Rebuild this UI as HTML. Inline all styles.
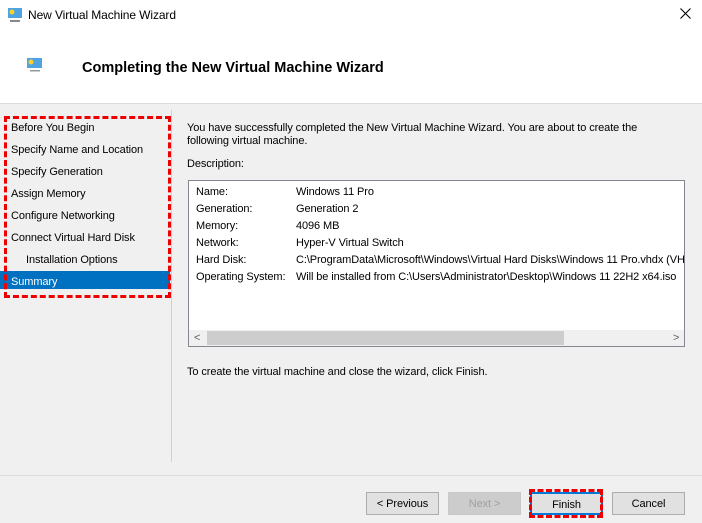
<!DOCTYPE html>
<html><head><style>
*{margin:0;padding:0;box-sizing:border-box}
body{width:702px;height:523px;background:#f0f0f0;font-family:"Liberation Sans",sans-serif;font-size:11px;letter-spacing:-0.1px;color:#000;position:relative;overflow:hidden}
.abs{position:absolute}
.nav div{position:absolute;left:11px;white-space:nowrap}
.btn{position:absolute;top:492px;height:23px;width:73px;border:1px solid #adadad;background:#e1e1e1;text-align:center;line-height:22px}
.lb div{position:absolute;white-space:nowrap}
</style></head><body>
<div class="abs" style="left:0;top:0;width:702px;height:104px;background:#fff;border-bottom:1px solid #dcdcdc"></div>
<svg class="abs" style="left:7px;top:7px" width="16" height="16"><rect x="1" y="1" width="14" height="10" fill="#4fa3e0"/><circle cx="5" cy="5" r="2.5" fill="#f6d32d"/><rect x="3" y="13" width="10" height="2" fill="#888"/></svg>
<div class="abs" style="left:28px;top:8px;font-size:12px">New Virtual Machine Wizard</div>
<svg class="abs" style="left:680px;top:8px" width="11" height="11"><path d="M0.5 0.5L10.5 10.5M10.5 0.5L0.5 10.5" stroke="#000" stroke-width="1.1"/></svg>
<svg class="abs" style="left:27px;top:58px" width="16" height="16"><rect x="0" y="0" width="15" height="10" fill="#4fa3e0"/><circle cx="4" cy="4" r="2.5" fill="#f6d32d"/><rect x="3" y="12" width="10" height="1.5" fill="#999"/></svg>
<div class="abs" style="left:82px;top:60px;font-size:14.5px;font-weight:bold;letter-spacing:0">Completing the New Virtual Machine Wizard</div>
<div class="nav">
<div style="top:122px">Before You Begin</div>
<div style="top:144px">Specify Name and Location</div>
<div style="top:166px">Specify Generation</div>
<div style="top:188px">Assign Memory</div>
<div style="top:210px">Configure Networking</div>
<div style="top:232px">Connect Virtual Hard Disk</div>
<div style="top:254px;left:26px">Installation Options</div>
</div>
<div class="abs" style="left:0;top:271px;width:170px;height:18px;background:#0070c0"></div>
<div class="abs" style="left:11px;top:276px;color:#fff">Summary</div>
<div class="abs" style="left:4px;top:116px;width:167px;height:182px;border:3px dashed #e00"></div>
<div class="abs" style="left:171px;top:110px;width:1px;height:352px;background:#d0d0d0"></div>
<div class="abs" style="left:187px;top:122px;line-height:13px">You have successfully completed the New Virtual Machine Wizard. You are about to create the<br>following virtual machine.</div>
<div class="abs" style="left:187px;top:158px">Description:</div>
<div class="abs lb" style="left:188px;top:180px;width:497px;height:167px;background:#fff;border:1px solid #828790">
<div style="left:7px;top:5px">Name:</div><div style="left:107px;top:5px">Windows 11 Pro</div>
<div style="left:7px;top:22px">Generation:</div><div style="left:107px;top:22px">Generation 2</div>
<div style="left:7px;top:39px">Memory:</div><div style="left:107px;top:39px">4096 MB</div>
<div style="left:7px;top:56px">Network:</div><div style="left:107px;top:56px">Hyper-V Virtual Switch</div>
<div style="left:7px;top:73px">Hard Disk:</div><div style="left:107px;top:73px;width:388px;overflow:hidden">C:\ProgramData\Microsoft\Windows\Virtual Hard Disks\Windows 11 Pro.vhdx (VHDX)</div>
<div style="left:7px;top:90px">Operating System:</div><div style="left:107px;top:90px">Will be installed from C:\Users\Administrator\Desktop\Windows 11 22H2 x64.iso</div>
<div style="left:0;top:149px;width:495px;height:16px;background:#f0f0f0"></div>
<div style="left:18px;top:150px;width:357px;height:14px;background:#cdcdcd"></div>
<div style="left:5px;top:151px;color:#606060">&lt;</div>
<div style="left:484px;top:151px;color:#606060">&gt;</div>
</div>
<div class="abs" style="left:187px;top:366px">To create the virtual machine and close the wizard, click Finish.</div>
<div class="abs" style="left:0;top:475px;width:702px;height:1px;background:#dcdcdc"></div>
<div class="btn" style="left:366px">&lt; Previous</div>
<div class="btn" style="left:448px;color:#a0a0a0;border-color:#c8c8c8;background:#ccc">Next &gt;</div>
<div class="btn" style="left:530px;border:2px solid #0078d7">Finish</div>
<div class="btn" style="left:612px">Cancel</div>
<div class="abs" style="left:529px;top:489px;width:74px;height:29px;border:3px dashed #e00"></div>
</body></html>
